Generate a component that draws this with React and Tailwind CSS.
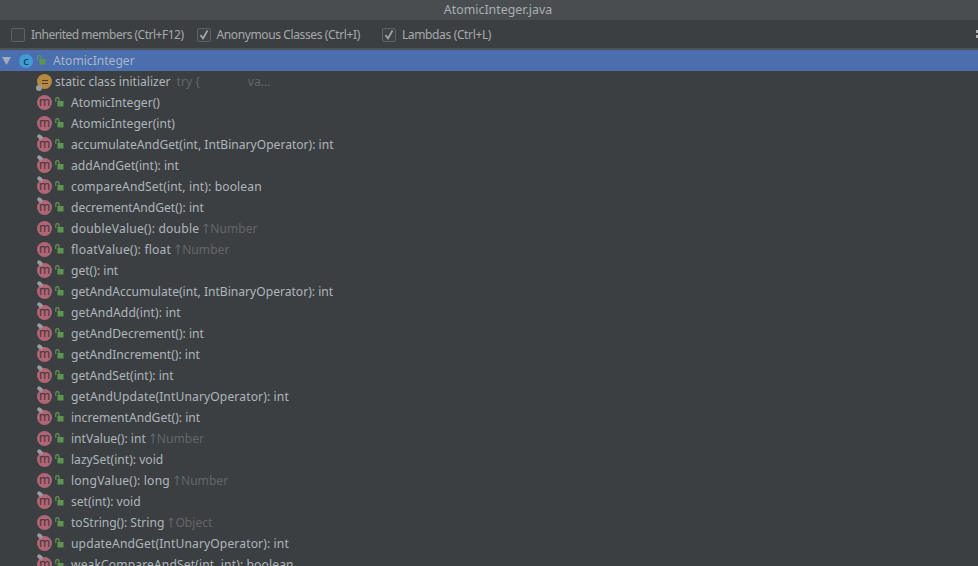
const wide = 'tracking-[0.2px]';
const slight = 'tracking-[0.12px]';

const members = [
  { name: 'AtomicInteger()' },
  { name: 'AtomicInteger(int)' },
  { name: 'accumulateAndGet(int, IntBinaryOperator): int', pin: true },
  { name: 'addAndGet(int): int', pin: true },
  { name: 'compareAndSet(int, int): boolean', pin: true, fit: slight },
  { name: 'decrementAndGet(): int', pin: true },
  { name: 'doubleValue(): double', from: 'Number', fit: wide },
  { name: 'floatValue(): float', from: 'Number', fit: wide },
  { name: 'get(): int', pin: true },
  { name: 'getAndAccumulate(int, IntBinaryOperator): int', pin: true },
  { name: 'getAndAdd(int): int', pin: true, fit: slight },
  { name: 'getAndDecrement(): int', pin: true },
  { name: 'getAndIncrement(): int', pin: true },
  { name: 'getAndSet(int): int', pin: true },
  { name: 'getAndUpdate(IntUnaryOperator): int', pin: true, fit: slight },
  { name: 'incrementAndGet(): int', pin: true },
  { name: 'intValue(): int', from: 'Number' },
  { name: 'lazySet(int): void', pin: true },
  { name: 'longValue(): long', from: 'Number', fit: wide },
  { name: 'set(int): void', pin: true },
  { name: 'toString(): String', from: 'Object' },
  { name: 'updateAndGet(IntUnaryOperator): int', pin: true, fit: slight },
  { name: 'weakCompareAndSet(int, int): boolean', pin: true, fit: slight },
];

const Check = ({ checked, label, fit }) => (
  <div className="flex items-center gap-[6px]">
    <div className="w-[14px] h-[14px] rounded-[2px] border border-[#5f6264] bg-[#3f4345] flex items-center justify-center">
      {checked && (
        <svg width="12" height="12" viewBox="0 0 12 12" fill="none">
          <path d="M2.5 6 L5 9.5 L9.5 1.5" stroke="#a4a6a8" strokeWidth="1.7" />
        </svg>
      )}
    </div>
    <span className={fit}>{label}</span>
  </div>
);

const Lock = () => (
  <svg width="10" height="11" viewBox="0 0 10 11" className="shrink-0">
    <rect x="2.5" y="4" width="6" height="5.5" fill="#5c9550" />
    <path d="M0.8 5 V2 Q0.8 0.6 2.4 0.6 Q4 0.6 4 2 V4" fill="none" stroke="#629b56" strokeWidth="1.1" />
  </svg>
);

const UpArrow = () => (
  <svg width="6" height="11" viewBox="0 0 6 11" className="shrink-0 mr-[1px]">
    <path d="M3 10.5 V1 M0.8 3.5 L3 0.8 L5.2 3.5" fill="none" stroke="#5f6f78" strokeWidth="1" />
  </svg>
);

const MethodRow = ({ name, from, pin, fit }) => (
  <div className="h-[21px] flex items-center pl-[37px] whitespace-nowrap">
    <div className="relative w-[15px] h-[15px] rounded-full bg-[#b16575] flex items-center justify-center text-[#43383d] text-[12px] leading-none shrink-0">
      <span className="mt-[-1px]">m</span>
      {pin && <span className="absolute left-[0px] top-[-2px] w-[6px] h-[4px] rounded-[2px] bg-[#9a9da0] rotate-[35deg]" />}
    </div>
    <div className="ml-[3px] mr-[6px]"><Lock /></div>
    <span className={fit}>{name}</span>
    {from && (
      <span className="ml-[4px] flex items-center text-[#62666a]">
        <UpArrow />
        {from}
      </span>
    )}
  </div>
);

export default function App() {
  return (
    <div className="w-[978px] h-[566px] overflow-hidden bg-[#3c3f41] text-[#aeb6bd] text-[12.1px] leading-[18px] font-['Noto_Sans','Open_Sans',sans-serif]">
      <div className="h-[20px] bg-[#4a4d50] flex items-center justify-center pl-[18px] pb-[1px] text-[#a8adb2] text-[12.4px]">AtomicInteger.java</div>
      <div className="relative h-[28px] bg-[#3c3f41] flex items-center pl-[11px] pt-[1px] text-[#a5a9ac] text-[12px]">
        <Check label="Inherited members (Ctrl+F12)" fit="tracking-[-0.5px]" />
        <div className="ml-[13px]"><Check checked label="Anonymous Classes (Ctrl+I)" fit="tracking-[-0.38px]" /></div>
        <div className="ml-[22px]"><Check checked label="Lambdas (Ctrl+L)" fit="tracking-[-0.36px]" /></div>
        <span className="absolute right-0 top-[10px] w-[2px] h-[3px] bg-[#b0b2b4]" />
        <span className="absolute right-0 top-[15px] w-[2px] h-[3px] bg-[#b0b2b4]" />
      </div>
      <div className="h-[2px] bg-[#505356]" />
      <div className="h-[21px] bg-[#4b6eaf] flex items-center pl-[2px] text-[#a9b7c6]">
        <svg width="10" height="10" viewBox="0 0 10 10" className="shrink-0">
          <path d="M0 1 H9 L4.5 9 Z" fill="#a3adbd" />
        </svg>
        <div className="ml-[7px] w-[14px] h-[14px] rounded-full bg-[#3f9cd4] text-[#1f3d55] text-[11px] font-medium flex items-center justify-center leading-none shrink-0">c</div>
        <div className="ml-[4px] mr-[6px]"><Lock /></div>
        <span>AtomicInteger</span>
      </div>
      <div className="h-[21px] flex items-center pl-[37px] whitespace-nowrap">
        <div className="relative w-[15px] h-[15px] rounded-full bg-[#b5893f] flex items-center justify-center shrink-0">
          <span className="w-[6px] h-[4px] border-y border-[#4a3f2a]" />
          <span className="absolute left-[-1px] bottom-[-2px] w-[6px] h-[6px] rounded-full bg-[#9a9da0]" />
        </div>
        <span className="ml-[3px]">static class initializer</span>
        <span className="ml-[6px] text-[#62666a]">try {'{'}</span>
        <span className="ml-[48px] text-[#62666a]">va...</span>
      </div>
      {members.map((m) => (
        <MethodRow key={m.name} {...m} />
      ))}
    </div>
  );
}
